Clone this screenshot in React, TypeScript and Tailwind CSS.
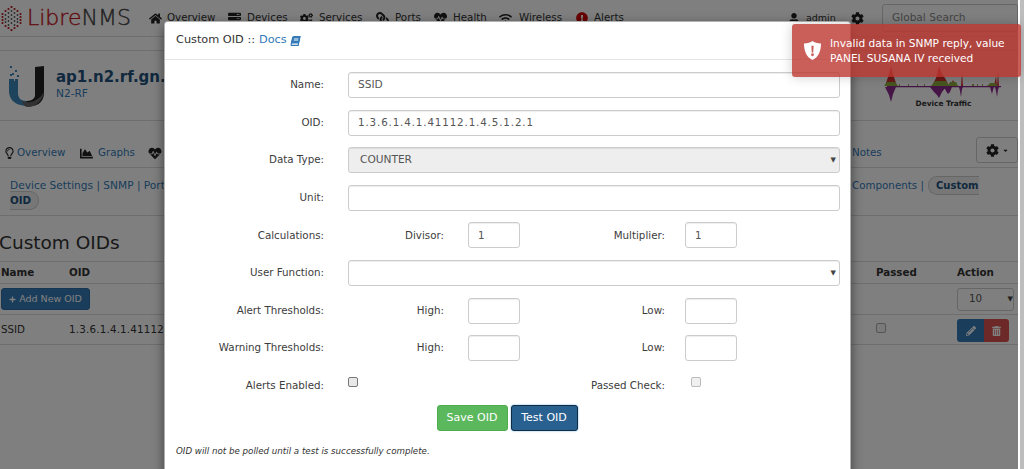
import { FaHome, FaServer, FaCogs, FaLink, FaHeartbeat, FaWifi, FaExclamationCircle, FaUser, FaCog, FaBook, FaPlus, FaPencilAlt, FaTrashAlt, FaChartArea, FaRegLightbulb, FaCaretDown } from 'react-icons/fa';

const font = 'font-["DejaVu_Sans",Verdana,sans-serif]';

const navItems = [
  { icon: FaHome, label: 'Overview', left: 'w-[18px]', width: 'w-[79px]', flip: '' },
  { icon: FaServer, label: 'Devices', left: 'w-[19px]', width: 'w-[72px]', flip: '' },
  { icon: FaCogs, label: 'Services', left: 'w-[19px]', width: 'w-[76px]', flip: '' },
  { icon: FaLink, label: 'Ports', left: 'w-[19px]', width: 'w-[58px]', flip: '-scale-x-100' },
  { icon: FaHeartbeat, label: 'Health', left: 'w-[19px]', width: 'w-[65px]', flip: '' },
  { icon: FaWifi, label: 'Wireless', left: 'w-[20px]', width: 'w-[77px]', flip: '' },
];

const redDots = [[10, 1], [13, 3], [7, 3], [4, 5], [16, 5], [1, 8], [19, 8], [1, 11], [19, 11], [1, 14], [19, 14], [1, 17], [19, 17], [4, 20], [16, 20], [7, 22], [13, 22], [10, 24]];
const darkDots = [[10, 5], [7, 7], [13, 7], [4, 9], [10, 9], [16, 9], [7, 11], [13, 11], [4, 13], [10, 13], [16, 13], [7, 15], [13, 15], [4, 16], [10, 17], [16, 16], [7, 19], [13, 19]];

const LogoMark = () => (
  <svg viewBox="0 0 20 25" className="w-[21px] h-[25px]">
    {redDots.map(([x, y]) => <circle key={`r${x}-${y}`} cx={x} cy={y} r="1.1" fill="#b5161d" />)}
    {darkDots.map(([x, y]) => <circle key={`d${x}-${y}`} cx={x} cy={y} r="0.9" fill="#555" />)}
  </svg>
);

const UbntLogo = () => (
  <svg viewBox="0 0 36 42" className="w-[36px] h-[42px]">
    <path d="M0 14h5v2h1v-2h3v14c0 5 3 8 8 8l2 5C8 41 0 36 0 26z" fill="#3d86b8" />
    <path d="M17 36c4 0 8-1 9-5V2l9-1v27c0 9-7 14-16 13z" fill="#222" />
    <path d="M13 36c6 3 16 1 22-9-1 8-8 15-16 15-3 0-5-2-6-6z" fill="#666" />
    <g fill="#3d86b8">
      <rect x="1" y="1" width="2" height="2" />
      <rect x="6" y="5" width="2" height="2" />
      <rect x="3" y="8" width="2" height="2" />
      <rect x="8" y="10" width="2" height="2" />
      <rect x="1" y="9" width="2" height="2" />
    </g>
  </svg>
);

// line sits at y=20; x=0 is page x 884
const TrafficChart = () => (
  <svg viewBox="0 0 120 38" className="w-[120px] h-[38px]">
    <path d="M1 20L5 8l2-8 2 8 4 12zM48 20l4-8 3-12 3 8 3 4 4 8zM66 20l3-6 3 6zM77 20l1-14 1 14zM110 20l2-10 1 10zM113 20l1-14 1 14z" fill="#d43030" />
    <path d="M0 20l3-4h8l3 4zM47 20l4-5h11l3 5zM64 20l2-4h6l2 4zM103 20l3-3h5l3 3zM15 18h1v3h-1zM24 18h1v3h-1zM33 18h1v3h-1zM40 18h1v3h-1zM88 18h2v3h-2zM93 18h1v3h-1zM98 18h1v3h-1z" fill="#8fae3c" />
    <path d="M3 20h114v1.200H3z" fill="#8a2b8a" />
    <path d="M1 21h11l-3 7-2 8-2-7zM46 21h16l-4 5-3 6-2-3-3-3zM60 21h8l-2 5-2 2-2-3zM75 21h4l-1 2-1 8-1-6zM106 21h4l-1 3-1 4zM111 21h4l-1 3-1 7-1-6z" fill="#8a2b8a" />
  </svg>
);

const Row = ({ label, children }: { label: string; children: React.ReactNode }) => (
  <div className="flex items-center h-[26px] mb-[11.6px]">
    <div className="w-[148px] text-right mr-[24px] text-[#3c3c3c] shrink-0">{label}</div>
    {children}
  </div>
);

const inputCls = 'h-[26px] border border-[#ccc] rounded-[3px] flex items-center px-[9px] text-[#555] shadow-[inset_0_1px_1px_rgba(0,0,0,0.075)] shrink-0';
const caret = <span className="ml-auto text-[7px] text-[#444] -mr-[6px]">▼</span>;

const SmallInput = ({ value }: { value?: string }) => <div className={`${inputCls} w-[52px] bg-white`}>{value}</div>;

const Pair = ({ a, b, c, d }: { a: string; b?: string; c: string; d?: string }) => (
  <>
    <div className="w-[120px] text-right mr-[24px] text-[#3c3c3c] -ml-[24px] shrink-0">{a}</div>
    <SmallInput value={b} />
    <div className="w-[145px] text-right mr-[20px] text-[#3c3c3c] shrink-0">{c}</div>
    <SmallInput value={d} />
  </>
);

const tableCols = 'grid grid-cols-[68px_807px_81px_1fr] items-center pl-[1px]';

export default function App() {
  return (
    <div className={`relative w-[1024px] h-[469px] overflow-hidden bg-white text-[10.3px] text-[#333] ${font}`}>
      {/* Page behind the dialog */}
      <div className="w-[1018px]">
        <div className="h-[37px] flex items-center border-b border-[#ddd]">
          <div className="w-[149px] shrink-0 pl-[1px] flex items-center gap-[5px] whitespace-nowrap">
            <LogoMark />
            <span className="text-[22px] leading-none font-extralight [-webkit-text-stroke:0.4px]">
              <span className="text-[#c5161d]">Libre</span>
              <span className="text-[#444]">NMS</span>
            </span>
          </div>
          {navItems.map(item => (
            <div key={item.label} className={`flex items-center shrink-0 ${item.width}`}>
              <span className={`${item.left} shrink-0`}><item.icon className={`w-[13px] h-[13px] text-[#222] ${item.flip}`} /></span>
              <span>{item.label}</span>
            </div>
          ))}
          <div className="flex items-center shrink-0 w-[213px]">
            <span className="w-[18px]"><FaExclamationCircle className="w-[12px] h-[12px] text-[#d00000]" /></span>
            <span>Alerts</span>
          </div>
          <div className="flex items-center w-[93px] shrink-0">
            <span className="w-[17px]"><FaUser className="w-[10px] h-[11px] text-[#222]" /></span>
            <span className="text-[9.5px] w-[45px]">admin</span>
            <FaCog className="w-[13px] h-[13px] text-[#222]" />
          </div>
          <div className="w-[136px] h-[28px] border border-[#ccc] rounded-[3px] flex items-center px-[9px] text-[#888] text-[10.6px] shrink-0">Global Search</div>
        </div>
        <div className="h-[14px] border-b border-[#ddd]" />
        <div className="h-[70px] border-b border-[#ddd] flex items-center pl-[9px] pr-[14px]">
          <UbntLogo />
          <div className="ml-[11px] -mt-[5px]">
            <div className="text-[15px] font-bold text-[#23527c] leading-[20px] whitespace-nowrap">ap1.n2.rf.gn.apc.org</div>
            <div className="text-[#337ab7] leading-[13px] text-[10.6px]">N2-RF</div>
          </div>
          <div className="ml-auto flex flex-col items-center w-[120px] mt-[5px]">
            <TrafficChart />
            <div className="text-[7.4px] font-bold -mt-[6px] mr-[1px]">Device Traffic</div>
          </div>
        </div>
        <div className="h-[47px] border-b border-[#ddd] flex items-center pt-[18px]">
          <FaRegLightbulb className="w-[11px] h-[12px] ml-[4px] mr-[2px] text-[#222] shrink-0" />
          <span className="text-[#337ab7] w-[62px] shrink-0">Overview</span>
          <span className="w-[19px] shrink-0"><FaChartArea className="w-[15px] h-[13px] text-[#222]" /></span>
          <span className="text-[#337ab7] w-[50px] shrink-0">Graphs</span>
          <FaHeartbeat className="w-[14px] h-[13px] text-[#222] shrink-0" />
          <span className="text-[#337ab7] ml-[690px]">Notes</span>
          <div className="ml-auto w-[42px] h-[26px] mt-[-6px] border border-[#ccc] rounded-[3px] flex items-center justify-center gap-[3px] text-[#222]">
            <FaCog className="w-[13px] h-[13px]" />
            <FaCaretDown className="w-[7px] h-[7px]" />
          </div>
        </div>
        <div className="h-[48px] border-b border-[#ddd] pl-[10px] pt-[10px] text-[#337ab7] leading-[15px]">
          <div className="flex items-center whitespace-nowrap">
            <span className="w-[842px] shrink-0 text-[10.6px]">Device Settings | SNMP | Port</span>
            <span className="w-[76px] shrink-0">Components |</span>
            <span className="w-[51px] h-[19px] -my-[2px] flex items-center rounded-l-[9px] bg-[#eee] border-l border-y border-[#ccc] pl-[7px] font-bold text-[10px] text-[#23527c] shrink-0">Custom</span>
          </div>
          <div className="w-[29px] h-[19px] -mt-[2px] flex items-center rounded-r-[9px] bg-[#eee] border-r border-y border-[#ccc] font-bold text-[#23527c]">OID</div>
        </div>
        <div className="h-[45px] flex items-end pb-[7px] text-[18.5px] leading-[22px] -ml-[1px] text-[#333]">Custom OIDs</div>
        <div className={`h-[23px] border-y border-[#ddd] font-bold ${tableCols}`}>
          <span>Name</span>
          <span>OID</span>
          <span>Passed</span>
          <span>Action</span>
        </div>
        <div className={`h-[31px] border-b border-[#ddd] ${tableCols}`}>
          <div className="col-span-3">
            <div className="w-[89px] h-[22px] bg-[#337ab7] border border-[#2e6da4] rounded-[3px] text-white flex items-center justify-center gap-[3px] text-[9.5px]">
              <FaPlus className="w-[7px] h-[7px]" />Add New OID
            </div>
          </div>
          <div className="w-[57px] h-[23px] border border-[#ccc] rounded-[3px] flex items-center pl-[11px] pr-[6px] text-[#555]">10{caret}</div>
        </div>
        <div className={`h-[30px] border-b border-[#ddd] ${tableCols}`}>
          <span>SSID</span>
          <span className="tracking-[0.2px]">1.3.6.1.4.1.41112.1.4.5.1.2.1</span>
          <span className="w-[10px] h-[10px] -mt-[4px] border border-[#aaa] rounded-[2px] bg-[#f4f4f4]" />
          <div className="flex h-[23px] mt-[2px]">
            <div className="w-[27px] bg-[#337ab7] rounded-l-[3px] flex items-center justify-center text-white"><FaPencilAlt className="w-[10px] h-[10px]" /></div>
            <div className="w-[25px] bg-[#d9534f] rounded-r-[3px] flex items-center justify-center text-white"><FaTrashAlt className="w-[9px] h-[10px]" /></div>
          </div>
        </div>
      </div>

      {/* Backdrop */}
      <div className="absolute inset-y-0 left-0 w-[1018px] bg-black/50" />
      <div className="absolute inset-y-0 right-0 w-[4px] bg-[#bdbdbd]" />

      {/* Dialog */}
      <div className="absolute left-[164px] top-[21px] w-[687px] h-[460px] bg-white rounded-[4px] border border-black/30 shadow-[0_4px_12px_rgba(0,0,0,0.5)] box-border">
        <div className="h-[38px] border-b border-[#e5e5e5] flex items-center pl-[11px] gap-[4px] text-[11.3px]">
          <span>Custom OID ::</span>
          <span className="text-[#337ab7]">Docs</span>
          <FaBook className="w-[9px] h-[10px] text-[#337ab7] -skew-x-12" />
        </div>
        <div className="pl-[11px] pr-[10px] pt-[12px]">
          <Row label="Name:"><div className={`${inputCls} w-[492px] bg-white text-[10.6px]`}>SSID</div></Row>
          <Row label="OID:"><div className={`${inputCls} w-[492px] bg-white tracking-[0.87px]`}>1.3.6.1.4.1.41112.1.4.5.1.2.1</div></Row>
          <Row label="Data Type:"><div className={`${inputCls} w-[492px] bg-[#eee] text-[10.6px] pl-[11px]`}>COUNTER{caret}</div></Row>
          <Row label="Unit:"><div className={`${inputCls} w-[492px] bg-white`} /></Row>
          <Row label="Calculations:"><Pair a="Divisor:" b="1" c="Multiplier:" d="1" /></Row>
          <Row label="User Function:"><div className={`${inputCls} w-[492px] bg-white`}>{caret}</div></Row>
          <Row label="Alert Thresholds:"><Pair a="High:" c="Low:" /></Row>
          <Row label="Warning Thresholds:"><Pair a="High:" c="Low:" /></Row>
          <div className="flex items-center h-[26px]">
            <div className="w-[148px] text-right mr-[24px] shrink-0 text-[#3c3c3c]">Alerts Enabled:</div>
            <span className="w-[10px] h-[10px] border border-[#777] rounded-[2px] bg-[#e8e8e8] -mt-[8px] shrink-0" />
            <div className="w-[307px] text-right mr-[26px] shrink-0 text-[#3c3c3c]">Passed Check:</div>
            <span className="w-[10px] h-[10px] border border-[#bbb] rounded-[2px] bg-[#f0f0f0] -mt-[8px] shrink-0" />
          </div>
          <div className="flex justify-center gap-[3px] mt-[6px] pr-[2px]">
            <div className="w-[71px] h-[26px] bg-[#5cb85c] border border-[#4cae4c] rounded-[3px] text-white flex items-center justify-center text-[11px]">Save OID</div>
            <div className="w-[67px] h-[26px] bg-[#286090] border border-[#122b40] rounded-[3px] text-white flex items-center justify-center shadow-[0_0_2px_#66afe9] text-[11px]">Test OID</div>
          </div>
          <div className="mt-[14px] text-[8.7px] italic text-[#333]">OID will not be polled until a test is successfully complete.</div>
        </div>
      </div>

      {/* Toast */}
      <div className="absolute left-[792px] top-[24px] w-[229px] h-[53px] bg-[#bd362f]/80 rounded-[3px] text-white flex items-center shadow-[0_0_12px_rgba(0,0,0,0.2)] text-[10.6px]">
        <svg viewBox="0 0 18 20" className="w-[17px] h-[19px] ml-[12px] mr-[9px] shrink-0">
          <path fillRule="evenodd" fill="#fff" d="M9 0c2 1.500 5 2.500 9 2.500C18 11 15 17 9 20 3 17 0 11 0 2.500 4 2.500 7 1.500 9 0zM7.800 5l.4 7h1.600l.4-7zM9 13a1.500 1.500 0 100 3 1.500 1.500 0 000-3z" />
        </svg>
        <div className="leading-[15px]">Invalid data in SNMP reply, value<br />PANEL SUSANA IV received</div>
      </div>
    </div>
  );
}
